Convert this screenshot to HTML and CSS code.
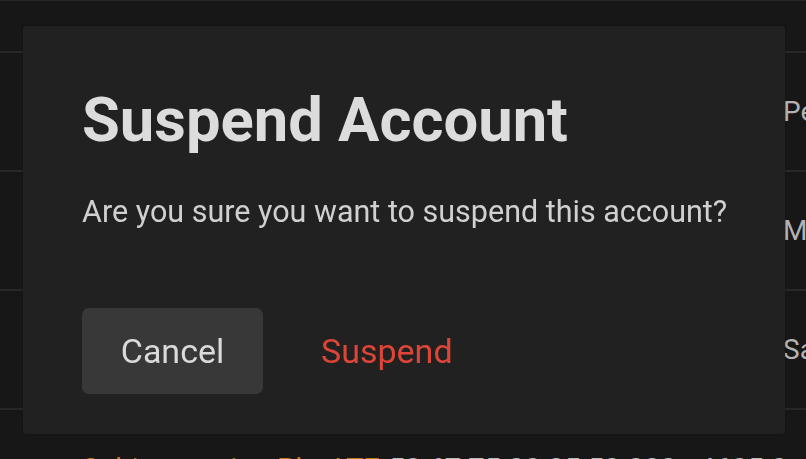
FILE: index.html
```html
<!DOCTYPE html>
<html>
<head>
<meta charset="utf-8">
<link rel="stylesheet" href="styles.css">
</head>
<body>
<div class="page">
  <div class="table">
    <div class="row row-head"></div>
    <div class="row"><span class="cell-name">Subintegration Plan</span><span class="cell-num">52 67 75 00 05 50 000</span><span class="cell-status">Pending</span></div>
    <div class="row"><span class="cell-name">Subintegration Plan</span><span class="cell-num">52 67 75 00 05 50 000</span><span class="cell-status">Migrated</span></div>
    <div class="row"><span class="cell-name">Subintegration Plan</span><span class="cell-num">52 67 75 00 05 50 000</span><span class="cell-status">Saved</span></div>
    <div class="row row-last"><span class="cell-name">Subintegration PlanLTE</span> <span class="cell-num">52 67 75 00 05 52 000 - 4605 0</span></div>
  </div>
</div>
<div class="overlay">
  <div class="dialog">
    <h2 class="dialog-title">Suspend Account</h2>
    <p class="dialog-text">Are you sure you want to suspend this account?</p>
    <div class="dialog-actions">
      <button class="btn btn-cancel">Cancel</button>
      <button class="btn btn-danger">Suspend</button>
    </div>
  </div>
</div>
</body>
</html>
```
FILE: styles.css
```css
html, body {
  margin: 0;
  padding: 0;
  background: #171717;
  overflow: hidden;
}
body {
  font-family: Roboto, "Liberation Sans", sans-serif;
  width: 806px;
  height: 459px;
}
.page {
  border-top: 1px solid #262626;
  height: 458px;
  overflow: hidden;
}
.table {
  display: flex;
  flex-direction: column;
}
.row {
  height: 117px;
  border-bottom: 2px solid #282828;
  display: flex;
  align-items: center;
  padding-left: 82px;
  font-size: 28px;
  white-space: nowrap;
}
.row > span {
  flex-shrink: 0;
}
.row-head {
  height: 50px;
}
.row-last {
  border-bottom: none;
  align-items: flex-start;
  padding-top: 42px;
  font-size: 29px;
}
.cell-name {
  color: #c8780f;
  width: 307px;
}
.cell-num {
  color: #b8b8b8;
  width: 394px;
}
.row-last .cell-name {
  width: auto;
  margin-right: 9px;
}
.row-last .cell-num {
  width: auto;
}
.cell-status {
  color: #b3b3b3;
}
.overlay {
  position: fixed;
  inset: 0;
  display: flex;
  align-items: flex-start;
  justify-content: flex-start;
  padding: 26px 0 0 23px;
}
.dialog {
  width: 762px;
  height: 408px;
  box-sizing: border-box;
  background: #212121;
  border-radius: 4px;
  box-shadow: 0 0 2px rgba(0,0,0,0.4);
  padding: 54px 40px 0 59px;
  display: flex;
  flex-direction: column;
}
.dialog-title {
  margin: 0;
  font-size: 61.5px;
  font-weight: 700;
  line-height: 80px;
  color: #dcdcdc;
}
.dialog-text {
  margin: 32px 0 0 0;
  font-size: 30.5px;
  line-height: 40px;
  color: #d0d0d0;
  white-space: nowrap;
}
.dialog-actions {
  margin-top: 76px;
  display: flex;
  align-items: center;
  gap: 58px;
}
.btn {
  font-family: Roboto, "Liberation Sans", sans-serif;
  font-size: 34px;
  border: none;
  background: none;
  padding: 0;
  cursor: pointer;
}
.btn-cancel {
  width: 181px;
  height: 86px;
  background: #383838;
  border-radius: 7px;
  color: #dadada;
}
.btn-danger {
  color: #dc4537;
}
```
